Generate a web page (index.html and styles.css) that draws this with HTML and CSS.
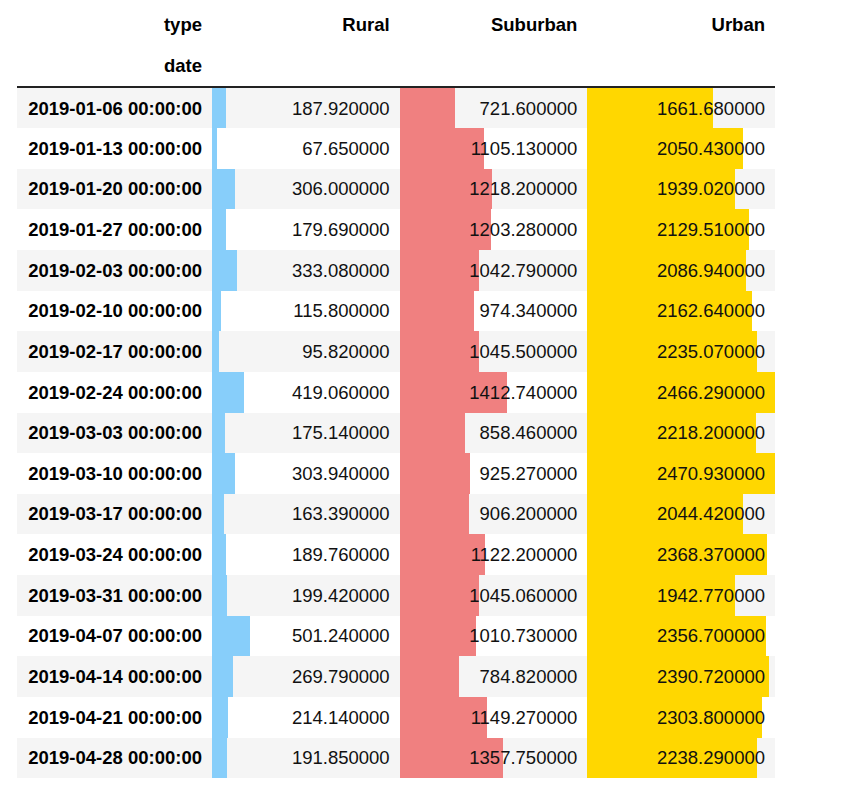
FILE: index.html
```html
<!DOCTYPE html>
<html>
<head>
<meta charset="utf-8">
<link rel="stylesheet" href="styles.css">
</head>
<body>
<table class="frame">
<colgroup><col class="c-idx"><col class="c-val"><col class="c-val"><col class="c-val"></colgroup>
<thead>
<tr><th class="name">type</th><th>Rural</th><th>Suburban</th><th>Urban</th></tr>
<tr><th class="name">date</th><th></th><th></th><th></th></tr>
</thead>
<tbody>
<tr><th>2019-01-06 00:00:00</th><td class="bar-r" style="--w:7.605%">187.920000</td><td class="bar-s" style="--w:29.204%">721.600000</td><td class="bar-u" style="--w:67.249%">1661.680000</td></tr>
<tr><th>2019-01-13 00:00:00</th><td class="bar-r" style="--w:2.738%">67.650000</td><td class="bar-s" style="--w:44.725%">1105.130000</td><td class="bar-u" style="--w:82.982%">2050.430000</td></tr>
<tr><th>2019-01-20 00:00:00</th><td class="bar-r" style="--w:12.384%">306.000000</td><td class="bar-s" style="--w:49.301%">1218.200000</td><td class="bar-u" style="--w:78.473%">1939.020000</td></tr>
<tr><th>2019-01-27 00:00:00</th><td class="bar-r" style="--w:7.272%">179.690000</td><td class="bar-s" style="--w:48.697%">1203.280000</td><td class="bar-u" style="--w:86.182%">2129.510000</td></tr>
<tr><th>2019-02-03 00:00:00</th><td class="bar-r" style="--w:13.480%">333.080000</td><td class="bar-s" style="--w:42.202%">1042.790000</td><td class="bar-u" style="--w:84.460%">2086.940000</td></tr>
<tr><th>2019-02-10 00:00:00</th><td class="bar-r" style="--w:4.687%">115.800000</td><td class="bar-s" style="--w:39.432%">974.340000</td><td class="bar-u" style="--w:87.523%">2162.640000</td></tr>
<tr><th>2019-02-17 00:00:00</th><td class="bar-r" style="--w:3.878%">95.820000</td><td class="bar-s" style="--w:42.312%">1045.500000</td><td class="bar-u" style="--w:90.455%">2235.070000</td></tr>
<tr><th>2019-02-24 00:00:00</th><td class="bar-r" style="--w:16.960%">419.060000</td><td class="bar-s" style="--w:57.174%">1412.740000</td><td class="bar-u" style="--w:99.812%">2466.290000</td></tr>
<tr><th>2019-03-03 00:00:00</th><td class="bar-r" style="--w:7.088%">175.140000</td><td class="bar-s" style="--w:34.742%">858.460000</td><td class="bar-u" style="--w:89.772%">2218.200000</td></tr>
<tr><th>2019-03-10 00:00:00</th><td class="bar-r" style="--w:12.301%">303.940000</td><td class="bar-s" style="--w:37.446%">925.270000</td><td class="bar-u" style="--w:100%">2470.930000</td></tr>
<tr><th>2019-03-17 00:00:00</th><td class="bar-r" style="--w:6.613%">163.390000</td><td class="bar-s" style="--w:36.674%">906.200000</td><td class="bar-u" style="--w:82.739%">2044.420000</td></tr>
<tr><th>2019-03-24 00:00:00</th><td class="bar-r" style="--w:7.680%">189.760000</td><td class="bar-s" style="--w:45.416%">1122.200000</td><td class="bar-u" style="--w:95.849%">2368.370000</td></tr>
<tr><th>2019-03-31 00:00:00</th><td class="bar-r" style="--w:8.071%">199.420000</td><td class="bar-s" style="--w:42.294%">1045.060000</td><td class="bar-u" style="--w:78.625%">1942.770000</td></tr>
<tr><th>2019-04-07 00:00:00</th><td class="bar-r" style="--w:20.285%">501.240000</td><td class="bar-s" style="--w:40.905%">1010.730000</td><td class="bar-u" style="--w:95.377%">2356.700000</td></tr>
<tr><th>2019-04-14 00:00:00</th><td class="bar-r" style="--w:10.919%">269.790000</td><td class="bar-s" style="--w:31.762%">784.820000</td><td class="bar-u" style="--w:96.754%">2390.720000</td></tr>
<tr><th>2019-04-21 00:00:00</th><td class="bar-r" style="--w:8.666%">214.140000</td><td class="bar-s" style="--w:46.512%">1149.270000</td><td class="bar-u" style="--w:93.236%">2303.800000</td></tr>
<tr><th>2019-04-28 00:00:00</th><td class="bar-r" style="--w:7.764%">191.850000</td><td class="bar-s" style="--w:54.949%">1357.750000</td><td class="bar-u" style="--w:90.585%">2238.290000</td></tr>
</tbody>
</table>
</body>
</html>
```
FILE: styles.css
```css
html, body {
  margin: 0;
  padding: 0;
  background: #ffffff;
}

body {
  padding: 4px 0 0 17px;
  font-family: "Liberation Sans", Arial, sans-serif;
  font-size: 18.5px;
  color: #000000;
}

.frame {
  border-collapse: collapse;
  border-spacing: 0;
  table-layout: fixed;
  width: 758px;
}

.c-idx { width: 195px; }
.c-val { width: 187.67px; }

.frame th,
.frame td {
  height: 40.65px;
  padding: 0 10px;
  text-align: right;
  vertical-align: middle;
  white-space: nowrap;
  line-height: 1.15;
  box-sizing: border-box;
}

.frame thead th {
  height: 41.7px;
}

.frame th {
  font-weight: bold;
}

.frame td {
  font-weight: normal;
  color: #111111;
}

.frame thead {
  border-bottom: 2px solid #222222;
}

.frame tbody tr:nth-child(odd) {
  background: #f5f5f5;
}

.bar-r {
  background: linear-gradient(90deg, #87cefa var(--w), transparent var(--w));
}

.bar-s {
  background: linear-gradient(90deg, #f08080 var(--w), transparent var(--w));
}

.bar-u {
  background: linear-gradient(90deg, #ffd700 var(--w), transparent var(--w));
}
```
